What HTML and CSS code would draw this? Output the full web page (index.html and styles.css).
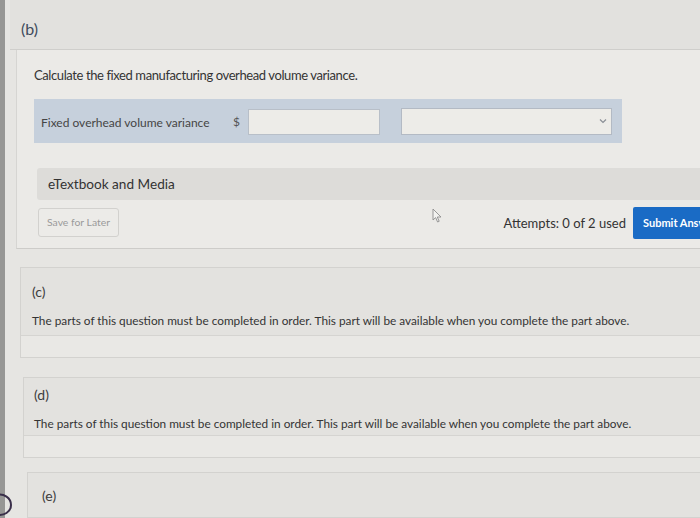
FILE: index.html
```html
<!DOCTYPE html>
<html>
<head>
<meta charset="utf-8">
<link rel="stylesheet" href="styles.css">
</head>
<body>
<div class="frame">
  <div class="strip"></div>
  <div class="main">
    <div class="part-head">(b)</div>
    <div class="part-body">
      <p class="prompt">Calculate the fixed manufacturing overhead volume variance.</p>
      <div class="answer-row">
        <span class="label">Fixed overhead volume variance</span>
        <span class="dollar">$</span>
        <span class="input"></span>
        <span class="select">
          <svg width="8" height="6" viewBox="0 0 8 6"><path d="M1 1.5 L4 4.5 L7 1.5" fill="none" stroke="#8a8f96" stroke-width="1.2"/></svg>
        </span>
      </div>
      <div class="media">eTextbook and Media</div>
      <div class="actions">
        <span class="save">Save for Later</span>
        <span class="spacer">
          <svg class="cursor" width="11" height="15" viewBox="0 0 11 15"><path d="M1 1 L1 12 L3.6 9.6 L5.6 14 L7.2 13.3 L5.3 9 L9 9 Z" fill="#f2f2f0" stroke="#8d8d8d" stroke-width="0.9" stroke-linejoin="round"/></svg>
        </span>
        <span class="attempts">Attempts: 0 of 2 used</span>
        <span class="submit">Submit Answer</span>
      </div>
    </div>

    <div class="part locked part-c">
      <div class="locked-head">
        <div class="letter">(c)</div>
        <div class="note">The parts of this question must be completed in order. This part will be available when you complete the part above.</div>
      </div>
      <div class="locked-foot"></div>
    </div>

    <div class="part locked part-d">
      <div class="locked-head">
        <div class="letter">(d)</div>
        <div class="note">The parts of this question must be completed in order. This part will be available when you complete the part above.</div>
      </div>
      <div class="locked-foot"></div>
    </div>

    <div class="part locked part-e">
      <div class="locked-head">
        <div class="letter">(e)</div>
      </div>
    </div>
  </div>
  <svg class="corner" width="14" height="26" viewBox="0 0 14 26"><path d="M-4 3 C4 1 11 6 11 13 C11 20 4 24 -4 23" fill="none" stroke="#3a2f4a" stroke-width="2"/></svg>
</div>
</body>
</html>
```

FILE: styles.css
```css
html, body {
  margin: 0;
  padding: 0;
}
body {
  width: 700px;
  height: 518px;
  overflow: hidden;
  background: #e6e5e2;
  font-family: Lato, "Open Sans", "Liberation Sans", sans-serif;
  color: #333;
}
.frame {
  position: relative;
  display: flex;
  height: 518px;
}
.strip {
  width: 5px;
  flex: none;
  background: #979795;
}
.main {
  flex: 1;
  display: flex;
  flex-direction: column;
  padding-left: 5px;
  min-width: 0;
}
.part-head {
  background: #e2e1de;
  border-bottom: 1px solid #cfcecb;
  padding-left: 11px;
  font-size: 16px;
  line-height: 58px;
  color: #3f4b5c;
  box-sizing: border-box;
  height: 50px;
}
.part-body {
  margin-left: 6px;
  height: 199px;
  box-sizing: border-box;
  background: #ebeae7;
  border-left: 1px solid #d6d5d2;
  border-bottom: 1px solid #cdccc9;
  padding: 0 0 0 17px;
  display: flex;
  flex-direction: column;
}
.prompt {
  margin: 17px 0 0 0;
  font-size: 13px;
  letter-spacing: -0.4px;
  line-height: 16px;
  color: #343434;
}
.answer-row {
  margin-top: 16px;
  width: 588px;
  height: 44px;
  box-sizing: border-box;
  background: #c6d0dc;
  display: flex;
  align-items: center;
  padding: 0 10px 0 7px;
}
.label {
  font-size: 12px;
  color: #454545;
  width: 192px;
  margin-top: 3px;
}
.dollar {
  font-size: 12px;
  color: #555;
  width: 15px;
  margin-top: 1px;
}
.input {
  width: 132px;
  height: 26px;
  box-sizing: border-box;
  background: #edece8;
  border: 1px solid #b8bfc8;
  margin-top: 1px;
}
.select {
  margin-left: 21px;
  width: 211px;
  height: 27px;
  box-sizing: border-box;
  background: #edece8;
  border: 1px solid #b3bac4;
  display: flex;
  align-items: center;
  justify-content: flex-end;
  padding-right: 4px;
}
.media {
  margin: 25px 0 0 3px;
  height: 32px;
  box-sizing: border-box;
  background: #dddcd9;
  border-radius: 3px 0 0 3px;
  padding-left: 11px;
  font-size: 13.6px;
  line-height: 32px;
  color: #333;
}
.actions {
  margin: 7px 0 0 4px;
  display: flex;
  align-items: center;
}
.save {
  width: 81px;
  height: 29px;
  flex: none;
  box-sizing: border-box;
  border: 1px solid #d2d1ce;
  border-radius: 3px;
  background: #ecebe8;
  font-size: 10.4px;
  color: #9a9a9a;
  display: flex;
  align-items: center;
  justify-content: center;
  margin-top: -2px;
}
.spacer {
  flex: 1;
  align-self: stretch;
  position: relative;
}
.cursor {
  position: absolute;
  left: 313px;
  top: 1px;
}
.attempts {
  font-size: 13px;
  color: #333;
  margin-right: 7px;
}
.submit {
  width: 67px;
  height: 32px;
  flex: none;
  box-sizing: border-box;
  background: #1a6bc5;
  border-radius: 2px 0 0 2px;
  color: #fff;
  font-weight: bold;
  font-size: 11px;
  line-height: 32px;
  padding-left: 10px;
  white-space: nowrap;
  overflow: hidden;
}
.part {
  background: #e3e2df;
  border: 1px solid #d3d2cf;
  border-right: none;
}
.part-c {
  margin: 18px 0 0 10px;
}
.part-d {
  margin: 19px 0 0 13px;
}
.part-e {
  margin: 14px 0 0 17px;
  flex: 1;
}
.locked-head {
  padding: 14px 0 0 11px;
  box-sizing: border-box;
}
.part-c .locked-head { height: 67px; }
.part-d .locked-head { height: 57px; padding-top: 7px; padding-left: 10px; }
.part-e .locked-head { padding-top: 13px; padding-left: 14px; }
.letter {
  font-size: 14px;
  line-height: 20px;
  color: #3d3d3d;
}
.note {
  margin-top: 12px;
  font-size: 11.8px;
  line-height: 14px;
  color: #343434;
  white-space: nowrap;
}
.part-d .note { margin-top: 12px; }
.locked-foot {
  height: 21px;
  background: #e9e8e5;
  border-top: 1px solid #d5d4d1;
}
.corner {
  position: absolute;
  left: 0;
  top: 492px;
}
```
